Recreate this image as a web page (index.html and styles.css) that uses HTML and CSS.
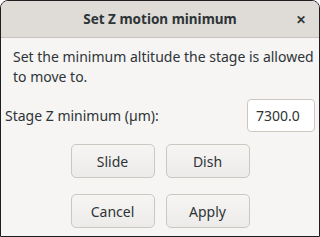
FILE: index.html
```html
<!DOCTYPE html>
<html lang="en">
<head>
  <meta charset="UTF-8">
  <title>Set Z motion minimum</title>
  <link rel="stylesheet" href="styles.css">
</head>
<body>
  <div class="dialog">
    <div class="titlebar">
      <span></span>
      <span class="title">Set Z motion minimum</span>
      <span class="close">&#x2715;</span>
    </div>
    <div class="content">
      <p class="message">Set the minimum altitude the stage is allowed to move to.</p>
      <div class="field-row">
        <label class="field-label" for="zmin">Stage Z minimum (µm):</label>
        <input class="field-input" id="zmin" type="text" value="7300.0">
      </div>
      <div class="button-grid">
        <button class="btn">Slide</button>
        <button class="btn">Dish</button>
      </div>
      <div class="button-grid actions">
        <button class="btn">Cancel</button>
        <button class="btn">Apply</button>
      </div>
    </div>
  </div>
</body>
</html>
```

FILE: styles.css
```css
body {
  margin: 0;
  padding: 0;
  font-family: "Noto Sans", "Open Sans", sans-serif;
  font-size: 14px;
  color: #2e3436;
  background-color: #ffffff;
}

.dialog {
  width: 320px;
  height: 237px;
  box-sizing: border-box;
  border: 1px solid #1e1e1e;
  border-radius: 8px 8px 0 0;
  background-color: #f6f5f4;
  overflow: hidden;
}

.titlebar {
  display: grid;
  grid-template-columns: 1fr auto 1fr;
  align-items: center;
  height: 36px;
  background-color: #dfdcd8;
  border-bottom: 1px solid #c9c4bf;
}

.title {
  font-weight: bold;
  font-size: 13.5px;
}

.close {
  justify-self: end;
  margin-right: 13px;
  font-size: 12px;
  font-weight: bold;
  color: #2e3436;
}

.content {
  padding: 0 4px 0 4px;
}

.message {
  margin: 9px 0 0 8px;
  line-height: 20px;
}

.field-row {
  display: flex;
  justify-content: space-between;
  align-items: center;
  margin-top: 12px;
}

.field-input {
  width: 68px;
  height: 33px;
  box-sizing: border-box;
  border: 1px solid #cdc7c2;
  border-radius: 4px;
  background-color: #ffffff;
  font-family: inherit;
  font-size: 14px;
  color: #2e3436;
  text-align: left;
  padding: 0 0 0 8px;
}

.button-grid {
  display: grid;
  grid-template-columns: 84px 84px;
  column-gap: 11px;
  justify-content: center;
  margin-top: 12px;
}

.actions {
  margin-top: 16px;
}

.btn {
  height: 34px;
  box-sizing: border-box;
  border: 1px solid #cdc7c2;
  border-radius: 5px;
  background: linear-gradient(#f6f5f4, #edebe9);
  font-family: inherit;
  font-size: 14px;
  color: #2e3436;
}
```
